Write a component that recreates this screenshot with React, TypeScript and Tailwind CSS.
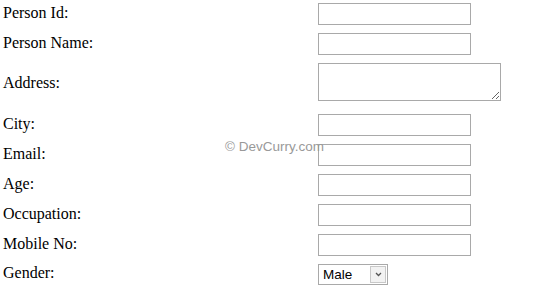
import React from "react";

function Row({
  label,
  h = "h-[30px]",
  pt = "pt-[4px]",
  children,
}: {
  label: string;
  h?: string;
  pt?: string;
  children: React.ReactNode;
}) {
  return (
    <div className={`flex ${h}`}>
      <div className={`w-[318px] shrink-0 pl-[3px] leading-[18px] ${pt}`}>{label}</div>
      <div className="pt-[3px]">{children}</div>
    </div>
  );
}

function TextBox() {
  return (
    <input
      type="text"
      className="block w-[153px] h-[22px] border border-[#a9a9a9] bg-white outline-none"
    />
  );
}

export default function App() {
  return (
    <div className="relative w-[552px] h-[290px] overflow-hidden bg-white text-black text-[16px] font-['Liberation_Serif',serif]">
      <Row label="Person Id:">
        <TextBox />
      </Row>
      <Row label="Person Name:">
        <TextBox />
      </Row>
      <Row label="Address:" h="h-[51px]" pt="pt-[14px]">
        <textarea className="block w-[183px] h-[38px] border border-[#a9a9a9] bg-white outline-none resize" />
      </Row>
      <Row label="City:">
        <TextBox />
      </Row>
      <Row label="Email:">
        <TextBox />
      </Row>
      <Row label="Age:">
        <TextBox />
      </Row>
      <Row label="Occupation:">
        <TextBox />
      </Row>
      <Row label="Mobile No:">
        <TextBox />
      </Row>
      <Row label="Gender:" pt="pt-[3px]">
        <div className="flex w-[70px] h-[21px] border border-[#a9a9a9] bg-white font-['Liberation_Sans',Arial,sans-serif] text-[13.5px] leading-[19px]">
          <div className="flex-1 pl-[4px]">Male</div>
          <div className="my-[1px] mr-[1px] w-[16px] border border-[#c8c8c8] bg-[#f2f2f2] flex items-center justify-center">
            <svg width="7" height="5" viewBox="0 0 7 5">
              <polyline points="1,1 3.5,3.5 6,1" fill="none" stroke="#555" strokeWidth="1.3" />
            </svg>
          </div>
        </div>
      </Row>
      <div className="absolute left-[225px] top-[140px] leading-[13px] text-[13.5px] text-[#999999] font-['Liberation_Sans',Arial,sans-serif] pointer-events-none">
        © DevCurry.com
      </div>
    </div>
  );
}
